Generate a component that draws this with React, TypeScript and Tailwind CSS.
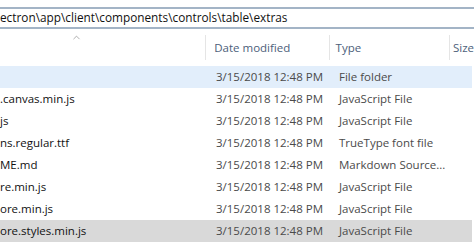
import { ChevronUp } from "lucide-react";

// Explorer details view, scrolled a bit to the right so the name column is clipped.

type Row = { name: string; date: string; type: string; state?: "hover" | "selected" };

const rows: Row[] = [
  { name: "", date: "3/15/2018 12:48 PM", type: "File folder", state: "hover" },
  { name: ".canvas.min.js", date: "3/15/2018 12:48 PM", type: "JavaScript File" },
  { name: "js", date: "3/15/2018 12:48 PM", type: "JavaScript File" },
  { name: "ns.regular.ttf", date: "3/15/2018 12:48 PM", type: "TrueType font file" },
  { name: "ME.md", date: "3/15/2018 12:48 PM", type: "Markdown Source..." },
  { name: "re.min.js", date: "3/15/2018 12:48 PM", type: "JavaScript File" },
  { name: "ore.min.js", date: "3/15/2018 12:48 PM", type: "JavaScript File" },
  { name: "ore.styles.min.js", date: "3/15/2018 12:48 PM", type: "JavaScript File", state: "selected" },
];

export default function App() {
  return (
    <div className="relative h-[248px] w-[474px] overflow-hidden bg-white font-['Open_Sans','Noto_Sans',sans-serif] text-[11.5px]">
      {/* Address bar */}
      <div className="mt-[7px] flex h-[22px] items-center border-y-2 border-[#a3b4c6] bg-white">
        <span className="whitespace-nowrap text-[11.8px] text-[#111]">
          ectron\app\client\components\controls\table\extras
        </span>
      </div>

      {/* Column headers */}
      <div className="flex h-[37px] text-[#4c607a]">
        <div className="flex w-[208px] justify-start">
          <ChevronUp className="ml-[71px] mt-[3px] h-[11px] w-[11px] text-[#8a8a8a]" strokeWidth={1.5} />
        </div>
        <div className="flex w-[125px] items-center">
          <div className="h-[25px] w-px bg-[#e5e5e5]" />
          <span className="pl-[8px] whitespace-nowrap">Date modified</span>
        </div>
        <div className="flex w-[122px] items-center">
          <div className="h-[25px] w-px bg-[#e5e5e5]" />
          <span className="pl-[6px] whitespace-nowrap">Type</span>
        </div>
        <div className="flex flex-1 items-center">
          <div className="h-[25px] w-px bg-[#e5e5e5]" />
          <span className="pl-[3px] whitespace-nowrap">Size</span>
        </div>
      </div>

      {/* File rows */}
      <div className="flex flex-col">
        {rows.map((row, i) => (
          <div
            key={i}
            className={`flex h-[22px] w-[472px] items-center ${
              row.state === "hover" ? "bg-[#e2eefb]" : row.state === "selected" ? "bg-[#d9d9d9]" : ""
            }`}
          >
            <span className="w-[208px] whitespace-nowrap text-[#111]">{row.name}</span>
            <span className="w-[125px] whitespace-nowrap pl-[8px] text-[#4a4a4a]">{row.date}</span>
            <span className="w-[122px] whitespace-nowrap pl-[6px] text-[#4a4a4a]">{row.type}</span>
          </div>
        ))}
      </div>
    </div>
  );
}
